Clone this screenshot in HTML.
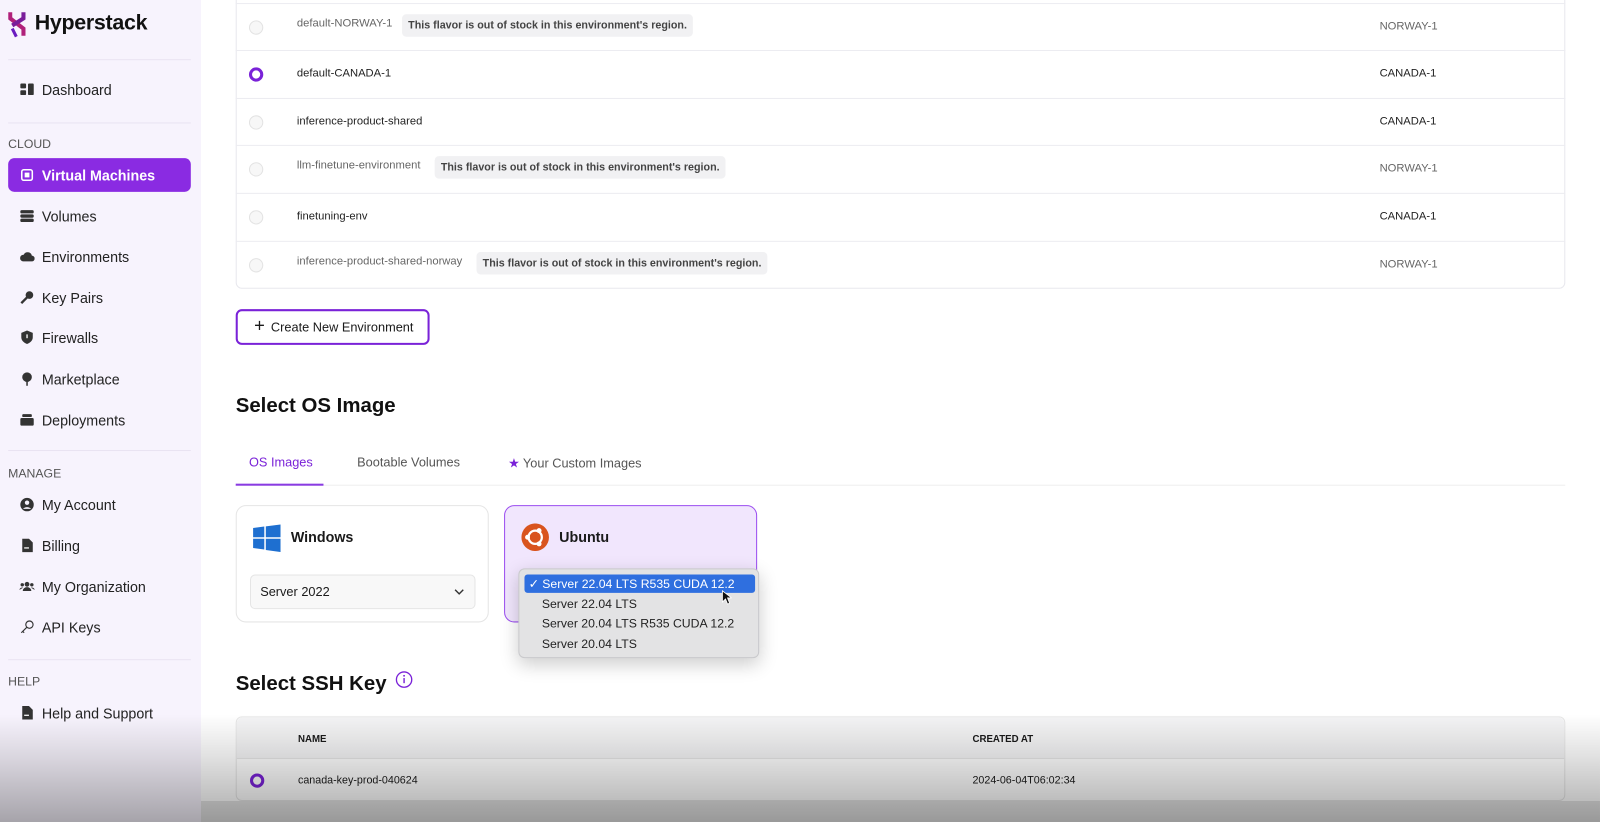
<!DOCTYPE html>
<html><head><meta charset="utf-8"><style>
*{box-sizing:border-box;margin:0;padding:0}
body{width:1600px;height:822px;overflow:hidden;position:relative;background:#fff;font-family:"Liberation Sans",sans-serif;color:#1a1a1a}
#w{position:absolute;left:0;top:0;width:1568px;height:806px;transform:scale(1.0204);transform-origin:0 0}
.side{position:absolute;left:0;top:0;width:197px;height:806px;background:#f7f3fd}
.logo{position:absolute;left:8px;top:9px;display:flex;align-items:center}
.logo b{font-size:21px;margin-left:8px;letter-spacing:-0.3px;color:#111}
.hr{position:absolute;left:8px;width:179px;height:1px;background:#e9e3f2}
.sec{position:absolute;left:8px;font-size:12px;color:#555}
.it{position:absolute;left:8px;width:179px;height:33px;display:flex;align-items:center;padding-left:11px;font-size:14px;color:#222}
.it svg{width:15px;height:15px;margin-right:7px}
.it.act{background:#8a2be2;border-radius:6px;color:#fff;font-weight:bold}
.tbl{position:absolute;left:231px;top:-10px;width:1303px;height:293px;border:1px solid #e8e8ee;border-radius:6px}
.row{position:absolute;left:231px;width:1303px;height:47px;border-top:1px solid #ececf1;font-size:11px}
.row .r{position:absolute;left:13px;top:16px;width:14px;height:14px;border-radius:50%;border:1px solid #e3e3e3;background:#f7f7f7}
.row .r.on{border:3px solid #7a22d8;background:#fff}
.row .n{position:absolute;left:60px;top:16px;color:#222}
.row .n.g{color:#666;top:13px}
.row .t{position:absolute;top:10px;background:#f1f1f3;padding:5px 6px;font-weight:bold;font-size:10.5px;color:#444;border-radius:4px}
.row .rg{position:absolute;left:1121px;top:16px;color:#222}
.row .rg.g{color:#666}
.btn{position:absolute;left:231px;top:303px;width:190px;height:35px;border:2px solid #7a22d8;border-radius:6px;font-size:12.5px;display:flex;align-items:center;padding-left:16px}
h2{position:absolute;left:231px;font-size:20px;font-weight:bold;color:#111}
.tabs{position:absolute;left:231px;top:440px;width:1303px;height:36px;border-bottom:1px solid #eee;font-size:12.5px;color:#555}
.tabs span{position:absolute;top:6px}
.card{position:absolute;top:495px;width:248px;height:115px;border:1px solid #e5e5e5;border-radius:10px;background:#fff}
.card .tt{position:absolute;left:53px;top:22px;font-size:14px;font-weight:bold}
.sel{position:absolute;left:13px;top:67px;width:221px;height:34px;border:1px solid #e5e5e5;border-radius:5px;background:#f8f8f8;font-size:12.5px;padding:9px 9px}
.dd{position:absolute;left:508px;top:557px;width:236px;height:88px;background:#e3e3e4;border:1px solid #c9c9cc;border-radius:6px;box-shadow:0 6px 18px rgba(0,0,0,.2);font-size:12px;color:#222}
.dd div{position:absolute;left:22px}
.dd .hl{left:5px;top:5px;width:226px;height:18px;background:#2f6fdf;color:#fff;border-radius:3px;padding:2px 0 0 4px}
.ssh{position:absolute;left:231px;top:702px;width:1303px;height:83px;border:1px solid #e6e6e6;border-radius:6px;font-size:10.5px}
.fade{position:absolute;left:0;top:700px;width:1568px;height:106px;background:linear-gradient(rgba(0,0,0,0),rgba(0,0,0,.12) 40%,rgba(0,0,0,.33))}
</style></head><body><div id="w">
<div class="side">
 <div class="logo"><svg width="18" height="28" viewBox="0 0 18 28"><path d="M2 3 L2 9 L15 19 L15 26" stroke="#b0207a" stroke-width="4" fill="none"/><path d="M15 3 L15 9 L4 16" stroke="#7a1e9a" stroke-width="4" fill="none"/><path d="M4 19 L8 27" stroke="#6a1bc0" stroke-width="3"/></svg><b>Hyperstack</b></div>
 <div class="hr" style="top:58px"></div>
 <div class="it" style="top:71px"><svg viewBox="0 0 16 16"><rect x="1" y="2" width="6" height="5" rx="1" fill="#333"/><rect x="1" y="9" width="6" height="5" rx="1" fill="#333"/><rect x="9" y="2" width="6" height="12" rx="1" fill="#333"/></svg>Dashboard</div>
 <div class="hr" style="top:120px"></div>
 <div class="sec" style="top:134px">CLOUD</div>
 <div class="it act" style="top:155px"><svg viewBox="0 0 16 16"><rect x="2.5" y="2.5" width="11" height="11" rx="2" fill="none" stroke="#fff" stroke-width="1.6"/><rect x="5.5" y="5.5" width="5" height="5" fill="#fff"/></svg>Virtual Machines</div>
 <div class="it" style="top:195px"><svg viewBox="0 0 16 16"><rect x="1" y="2" width="14" height="3.5" rx="1.5" fill="#333"/><rect x="1" y="6.5" width="14" height="3.5" rx="1.5" fill="#333"/><rect x="1" y="11" width="14" height="3.5" rx="1.5" fill="#333"/></svg>Volumes</div>
 <div class="it" style="top:235px"><svg viewBox="0 0 16 16"><path d="M4 13h9a3 3 0 0 0 0-6 4.5 4.5 0 0 0-8.5-1A3.5 3.5 0 0 0 4 13z" fill="#333"/></svg>Environments</div>
 <div class="it" style="top:275px"><svg viewBox="0 0 16 16"><circle cx="10.5" cy="5.5" r="4" fill="#333"/><path d="M8 8 L2 14" stroke="#333" stroke-width="2.5"/></svg>Key Pairs</div>
 <div class="it" style="top:314px"><svg viewBox="0 0 16 16"><path d="M8 1 L14 3.5 V8 C14 11.5 11 14 8 15 C5 14 2 11.5 2 8 V3.5Z" fill="#333"/><rect x="7.3" y="5" width="1.4" height="4" fill="#fff"/></svg>Firewalls</div>
 <div class="it" style="top:355px"><svg viewBox="0 0 16 16"><circle cx="8" cy="6" r="5" fill="#333"/><rect x="7.2" y="10" width="1.6" height="5" fill="#333"/></svg>Marketplace</div>
 <div class="it" style="top:395px"><svg viewBox="0 0 16 16"><rect x="3" y="2" width="10" height="3" rx="1" fill="#333"/><rect x="1" y="6" width="14" height="8" rx="1.5" fill="#333"/></svg>Deployments</div>
 <div class="hr" style="top:441px"></div>
 <div class="sec" style="top:457px">MANAGE</div>
 <div class="it" style="top:478px"><svg viewBox="0 0 16 16"><circle cx="8" cy="8" r="7" fill="#333"/><circle cx="8" cy="6" r="2.3" fill="#f7f3fd"/><path d="M3.8 12.5a5 4 0 0 1 8.4 0" fill="#f7f3fd"/></svg>My Account</div>
 <div class="it" style="top:518px"><svg viewBox="0 0 16 16"><path d="M3 1h7l4 4v10H3z" fill="#333"/><rect x="5" y="10" width="5" height="1.3" fill="#fff"/></svg>Billing</div>
 <div class="it" style="top:558px"><svg viewBox="0 0 16 16"><circle cx="8" cy="6" r="2.5" fill="#333"/><circle cx="3" cy="6.5" r="1.8" fill="#333"/><circle cx="13" cy="6.5" r="1.8" fill="#333"/><path d="M3.5 13a4.5 4 0 0 1 9 0z M0 12a3 3 0 0 1 4-2.5 M16 12a3 3 0 0 0-4-2.5" fill="#333"/></svg>My Organization</div>
 <div class="it" style="top:598px"><svg viewBox="0 0 16 16"><circle cx="10.5" cy="5.5" r="3.8" fill="none" stroke="#333" stroke-width="1.2"/><path d="M8 8 L2 14 M3.5 12.5 L5 14" stroke="#333" stroke-width="1.2"/></svg>API Keys</div>
 <div class="hr" style="top:646px"></div>
 <div class="sec" style="top:661px">HELP</div>
 <div class="it" style="top:682px"><svg viewBox="0 0 16 16"><path d="M3 1h7l4 4v10H3z" fill="#333"/><rect x="5" y="10" width="5" height="1.3" fill="#fff"/></svg>Help and Support</div>
</div>

<div class="tbl"></div>
<div class="row" style="top:3px"><div class="r"></div><div class="n g">default-NORWAY-1</div><div class="t" style="left:163px">This flavor is out of stock in this environment's region.</div><div class="rg g">NORWAY-1</div></div>
<div class="row" style="top:49px"><div class="r on"></div><div class="n">default-CANADA-1</div><div class="rg">CANADA-1</div></div>
<div class="row" style="top:96px"><div class="r"></div><div class="n">inference-product-shared</div><div class="rg">CANADA-1</div></div>
<div class="row" style="top:142px"><div class="r"></div><div class="n g">llm-finetune-environment</div><div class="t" style="left:195px">This flavor is out of stock in this environment's region.</div><div class="rg g">NORWAY-1</div></div>
<div class="row" style="top:189px"><div class="r"></div><div class="n">finetuning-env</div><div class="rg">CANADA-1</div></div>
<div class="row" style="top:236px"><div class="r"></div><div class="n g">inference-product-shared-norway</div><div class="t" style="left:236px">This flavor is out of stock in this environment's region.</div><div class="rg g">NORWAY-1</div></div>

<div class="btn"><span style="font-size:18px;font-weight:300;margin-right:6px;margin-top:-2px">+</span>Create New Environment</div>
<h2 style="top:387px">Select OS Image</h2>
<div class="tabs"><span style="left:13px;color:#7a22d8">OS Images</span><span style="left:119px">Bootable Volumes</span><span style="left:267px"><span style="position:static;color:#7a22d8">★</span> Your Custom Images</span>
<div style="position:absolute;left:0;top:34px;width:86px;height:2px;background:#8a3be2"></div></div>

<div class="card" style="left:231px"><svg style="position:absolute;left:16px;top:18px" width="27" height="27" viewBox="0 0 27 27"><path d="M0 3.5L11 2V12.5H0Z M12.5 1.8L27 0V12.5H12.5Z M0 14H11V24.5L0 23Z M12.5 14H27V27L12.5 25Z" fill="#1e6fd0"/></svg><div class="tt">Windows</div>
<div class="sel">Server 2022<svg style="position:absolute;right:10px;top:13px" width="10" height="6" viewBox="0 0 10 6"><path d="M1 1l4 4 4-4" stroke="#333" stroke-width="1.4" fill="none"/></svg></div></div>
<div class="card" style="left:494px;background:#f1e6fd;border:1.5px solid #9b4df0"><svg style="position:absolute;left:16px;top:17px" width="27" height="27" viewBox="0 0 27 27"><circle cx="13.5" cy="13.5" r="13.5" fill="#d9541e"/><circle cx="13.5" cy="13.5" r="6.5" fill="none" stroke="#fff" stroke-width="2.2"/><circle cx="6" cy="13.5" r="2.4" fill="#fff"/><circle cx="17.3" cy="7" r="2.4" fill="#fff"/><circle cx="17.3" cy="20" r="2.4" fill="#fff"/></svg><div class="tt">Ubuntu</div></div>
<div class="dd"><div class="hl">✓ Server 22.04 LTS R535 CUDA 12.2</div><div style="top:27px">Server 22.04 LTS</div><div style="top:46px">Server 20.04 LTS R535 CUDA 12.2</div><div style="top:66px">Server 20.04 LTS</div></div>
<svg style="position:absolute;left:707px;top:578px" width="10" height="15" viewBox="0 0 10 15"><path d="M1 1v11l3-3 2 5 2-1-2-5h4z" fill="#111" stroke="#fff" stroke-width=".8"/></svg>

<h2 style="top:659px">Select SSH Key</h2>
<svg style="position:absolute;left:387px;top:657px" width="18" height="18" viewBox="0 0 18 18"><circle cx="9" cy="9" r="7.5" fill="none" stroke="#7a22d8" stroke-width="1.3"/><rect x="8.3" y="7.5" width="1.4" height="5" fill="#7a22d8"/><circle cx="9" cy="5.3" r=".9" fill="#7a22d8"/></svg>
<div class="ssh"><div style="position:absolute;left:0;top:0;width:100%;height:41px;background:#f4f4f5;border-bottom:1px solid #e3e3e3;border-radius:6px 6px 0 0"></div>
<div style="position:absolute;left:60px;top:16px;font-weight:bold;font-size:9.5px">NAME</div><div style="position:absolute;left:721px;top:16px;font-weight:bold;font-size:9.5px">CREATED AT</div>
<div style="position:absolute;left:13px;top:55px;width:14px;height:14px;border-radius:50%;border:3px solid #7a22d8;background:#fff"></div>
<div style="position:absolute;left:60px;top:56px">canada-key-prod-040624</div><div style="position:absolute;left:721px;top:56px">2024-06-04T06:02:34</div></div>
<div style="position:absolute;left:197px;top:785px;width:1371px;height:21px;background:#e4e4e4"></div>
<div class="fade"></div>
</div></body></html>
